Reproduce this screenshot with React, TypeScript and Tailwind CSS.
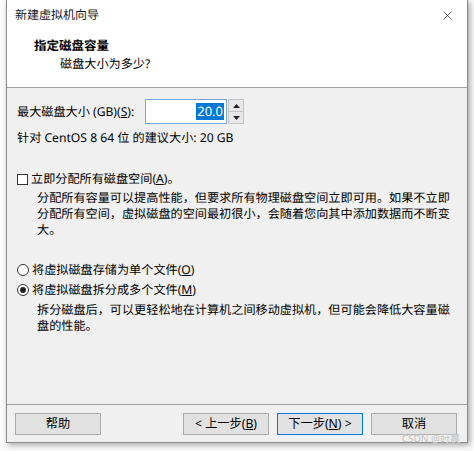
import { X } from "lucide-react";

function Btn({ children, primary }: { children: React.ReactNode; primary?: boolean }) {
  return (
    <button
      className={
        "w-[86px] h-[22px] flex items-center justify-center bg-[#e1e1e1] text-[12.2px] text-black leading-none border " +
        (primary ? "border-[#0078d7]" : "border-[#adadad]")
      }
    >
      {children}
    </button>
  );
}

function Lines({ lines, className }: { lines: string[]; className?: string }) {
  return (
    <div className={className}>
      {lines.map((l) => (
        <div key={l} className="whitespace-nowrap">
          {l}
        </div>
      ))}
    </div>
  );
}

export default function App() {
  return (
    <div className="relative w-[474px] h-[451px] overflow-hidden bg-[#fbfbfb] font-['Noto_Sans','Noto_Sans_CJK_SC',sans-serif] text-black [text-rendering:geometricPrecision]">
      <div className="ml-[6px] w-[462px] h-[443px] flex flex-col border-x border-b border-[#8a8a8a] bg-[#f0f0f0] shadow-[2px_2px_6px_rgba(0,0,0,0.35)]">
        {/* title bar */}
        <div className="h-[30px] bg-white flex items-center justify-between pl-[8px] pr-[12px]">
          <span className="text-[12px] text-[#1a1a1a]">新建虚拟机向导</span>
          <X size={15} strokeWidth={1.2} className="text-[#333]" />
        </div>

        {/* header */}
        <div className="h-[58px] bg-white border-b border-[#a0a0a0] flex flex-col pt-[7px]">
          <div className="pl-[27px] text-[12.5px] font-bold leading-[18px]">指定磁盘容量</div>
          <div className="pl-[53px] text-[12.15px] leading-[18px]">磁盘大小为多少?</div>
        </div>

        {/* content */}
        <div className="flex-1 flex flex-col pl-[10px] text-[12.15px] leading-[16px]">
          <div className="mt-[11px] flex items-center h-[25px]">
            <span className="w-[128px]">
              最大磁盘大小 (GB)(<span className="underline">S</span>):
            </span>
            <div className="w-[82px] h-[25px] bg-white border border-[#7aa7d9] flex items-center justify-end pr-[2px]">
              <span className="bg-[#0078d7] text-white text-[13px] leading-[17px] px-[1px]">20.0</span>
            </div>
            <div className="w-[16px] h-[25px] flex flex-col ml-[1px]">
              <div className="flex-1 bg-[#e8e8e8] border border-[#c4c4c4] flex items-center justify-center">
                <svg width="7" height="4" viewBox="0 0 7 4">
                  <path d="M0 4 L3.5 0 L7 4 Z" fill="#222" />
                </svg>
              </div>
              <div className="flex-1 bg-[#e8e8e8] border border-t-0 border-[#c4c4c4] flex items-center justify-center">
                <svg width="7" height="4" viewBox="0 0 7 4">
                  <path d="M0 0 L3.5 4 L7 0 Z" fill="#222" />
                </svg>
              </div>
            </div>
          </div>
          <div className="mt-[6px]">针对 CentOS 8 64 位 的建议大小: 20 GB</div>

          <div className="mt-[25px] flex items-center h-[16px]">
            <span className="w-[11px] h-[11px] border border-[#333] bg-white mr-[3px]" />
            <span>
              立即分配所有磁盘空间(<span className="underline">A</span>)。
            </span>
          </div>
          <Lines
            className="mt-[3px] ml-[20px]"
            lines={[
              "分配所有容量可以提高性能，但要求所有物理磁盘空间立即可用。如果不立即",
              "分配所有空间，虚拟磁盘的空间最初很小，会随着您向其中添加数据而不断变",
              "大。",
            ]}
          />

          <div className="mt-[22px] flex items-center h-[20px]">
            <span className="w-[12px] h-[12px] rounded-full border border-[#333] bg-white mr-[3px]" />
            <span>
              将虚拟磁盘存储为单个文件(<span className="underline">O</span>)
            </span>
          </div>
          <div className="flex items-center h-[20px]">
            <span className="w-[12px] h-[12px] rounded-full border border-[#333] bg-white mr-[3px] flex items-center justify-center">
              <span className="w-[6px] h-[6px] rounded-full bg-[#222]" />
            </span>
            <span>
              将虚拟磁盘拆分成多个文件(<span className="underline">M</span>)
            </span>
          </div>
          <Lines
            className="mt-[2px] ml-[20px]"
            lines={["拆分磁盘后，可以更轻松地在计算机之间移动虚拟机，但可能会降低大容量磁", "盘的性能。"]}
          />
        </div>

        {/* footer */}
        <div className="h-[38px] border-t border-[#a0a0a0] flex items-start justify-between pt-[8px] pl-[8px] pr-[10px]">
          <Btn>帮助</Btn>
          <div className="flex gap-[8px]">
            <Btn>
              &lt; 上一步(<span className="underline">B</span>)
            </Btn>
            <Btn primary>
              下一步(<span className="underline">N</span>) &gt;
            </Btn>
            <Btn>取消</Btn>
          </div>
        </div>
      </div>

      <span className="absolute right-[14px] bottom-[8px] text-[10px] leading-none text-[#bdbdbd] [text-shadow:0_0_1px_#ffffff]">
        CSDN @莳晨
      </span>
    </div>
  );
}
